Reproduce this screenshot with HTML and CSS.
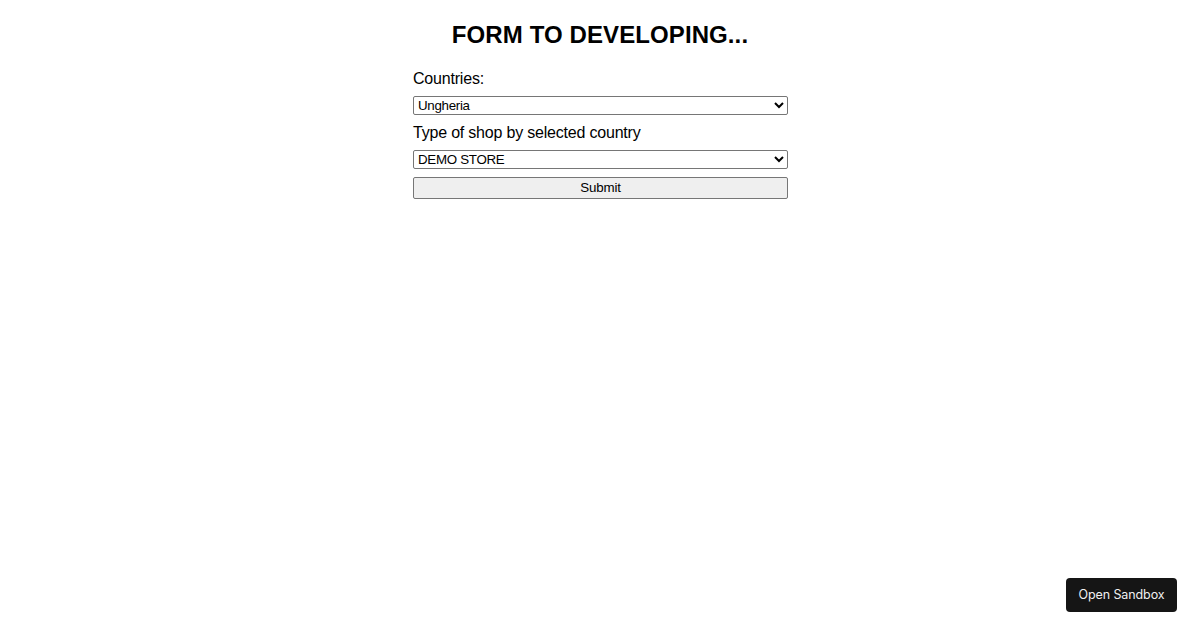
FILE: index.html
```html
<!DOCTYPE html>
<html>
<head>
<meta charset="utf-8">
<link rel="stylesheet" href="styles.css">
</head>
<body>
<div class="page">
  <h2 class="title">FORM TO DEVELOPING...</h2>
  <form class="form">
    <label class="label" for="country">Countries:</label>
    <select class="select" id="country">
      <option>Ungheria</option>
    </select>
    <label class="label" for="shop">Type of shop by selected country</label>
    <select class="select" id="shop">
      <option>DEMO STORE</option>
    </select>
    <button type="button" class="submit">Submit</button>
  </form>
</div>
<a class="sandbox">Open Sandbox</a>
</body>
</html>
```
FILE: styles.css
```css
html, body {
  margin: 0;
  padding: 0;
  background: #fff;
}
body {
  font-family: "Liberation Sans", Arial, sans-serif;
  color: #000;
  width: 1200px;
  height: 630px;
  position: relative;
  overflow: hidden;
}
.page {
  display: flex;
  flex-direction: column;
  align-items: center;
  padding-top: 21px;
}
.title {
  margin: 0;
  font-size: 24px;
  line-height: 28px;
  font-weight: bold;
  letter-spacing: 0.1px;
}
.form {
  width: 375px;
  display: flex;
  flex-direction: column;
  margin-top: 20px;
  padding-left: 1px;
}
.label {
  font-size: 16px;
  line-height: 18px;
  padding-top: 1px;
  margin-bottom: 8px;
  letter-spacing: -0.2px;
}
.select {
  font-family: "Liberation Sans", Arial, sans-serif;
  font-size: 13.33px;
  letter-spacing: -0.3px;
  height: 19px;
  box-sizing: border-box;
  border: 1px solid #767676;
  border-radius: 2px;
  background: #fff;
  color: #000;
  padding: 0;
  margin: 0 0 8px 0;
  width: 375px;
}
.submit {
  font-family: "Liberation Sans", Arial, sans-serif;
  font-size: 13.33px;
  letter-spacing: -0.2px;
  height: 22px;
  box-sizing: border-box;
  width: 375px;
  border: 1px solid #767676;
  border-radius: 2px;
  background: #efefef;
  color: #000;
  padding: 0 0 1px 0;
}
.sandbox {
  position: absolute;
  right: 23px;
  bottom: 18px;
  width: 111px;
  height: 34px;
  box-sizing: border-box;
  padding-bottom: 2px;
  background: #151515;
  color: #f0f0f0;
  border-radius: 4px;
  font-family: Inter, "Liberation Sans", sans-serif;
  font-size: 12.5px;
  letter-spacing: -0.1px;
  display: flex;
  align-items: center;
  justify-content: center;
}
```
